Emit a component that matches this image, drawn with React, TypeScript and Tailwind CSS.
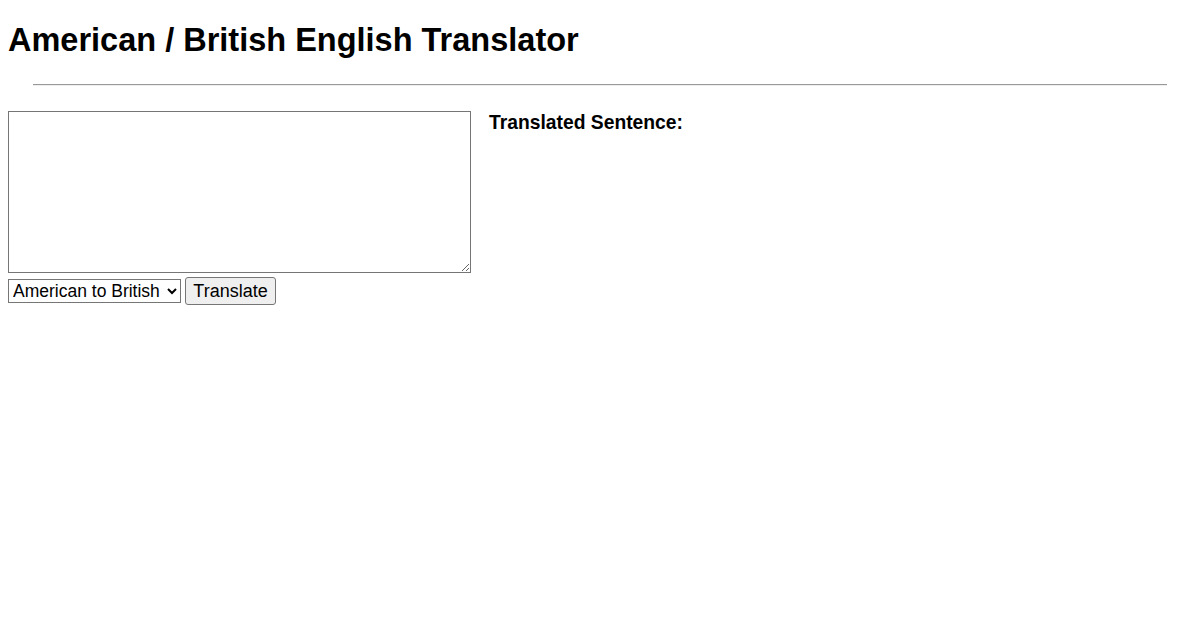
import React, { useState } from 'react';

const App: React.FC = () => {
  const [text, setText] = useState('');
  const [mode, setMode] = useState('american-to-british');

  return (
    <div className="min-h-screen bg-white p-2 font-['Liberation_Sans',Arial,sans-serif] text-black">
      <h1 className="mt-[14px] text-[32.5px] font-bold leading-[37px]">American / British English Translator</h1>
      <hr className="mx-[25px] mt-[25px] h-0 border-t border-b border-t-[#9a9a9a] border-b-[#eeeeee]" />

      <div className="mt-[25px] flex items-start gap-[18px]">
        {/* Input */}
        <div className="flex flex-col">
          <textarea
            className="block h-[162px] w-[463px] border border-[#767676] bg-white p-[2px] text-[13px]"
            value={text}
            onChange={(e) => setText(e.target.value)}
          />
          <div className="mt-[4px] flex items-center gap-[4px]">
            <select
              className="h-[24px] w-[173px] border border-[#767676] bg-white pl-0 text-[17.5px] leading-[22px]"
              value={mode}
              onChange={(e) => setMode(e.target.value)}
            >
              <option value="american-to-british">American to British</option>
              <option value="british-to-american">British to American</option>
            </select>
            <button className="h-[28px] w-[91px] rounded-[3px] border border-[#767676] bg-[#efefef] text-[18px] leading-[22px]">
              Translate
            </button>
          </div>
        </div>

        {/* Output */}
        <h3 className="mt-[1px] text-[19.3px] font-bold leading-[22px]">Translated Sentence:</h3>
      </div>
    </div>
  );
};

export default App;
